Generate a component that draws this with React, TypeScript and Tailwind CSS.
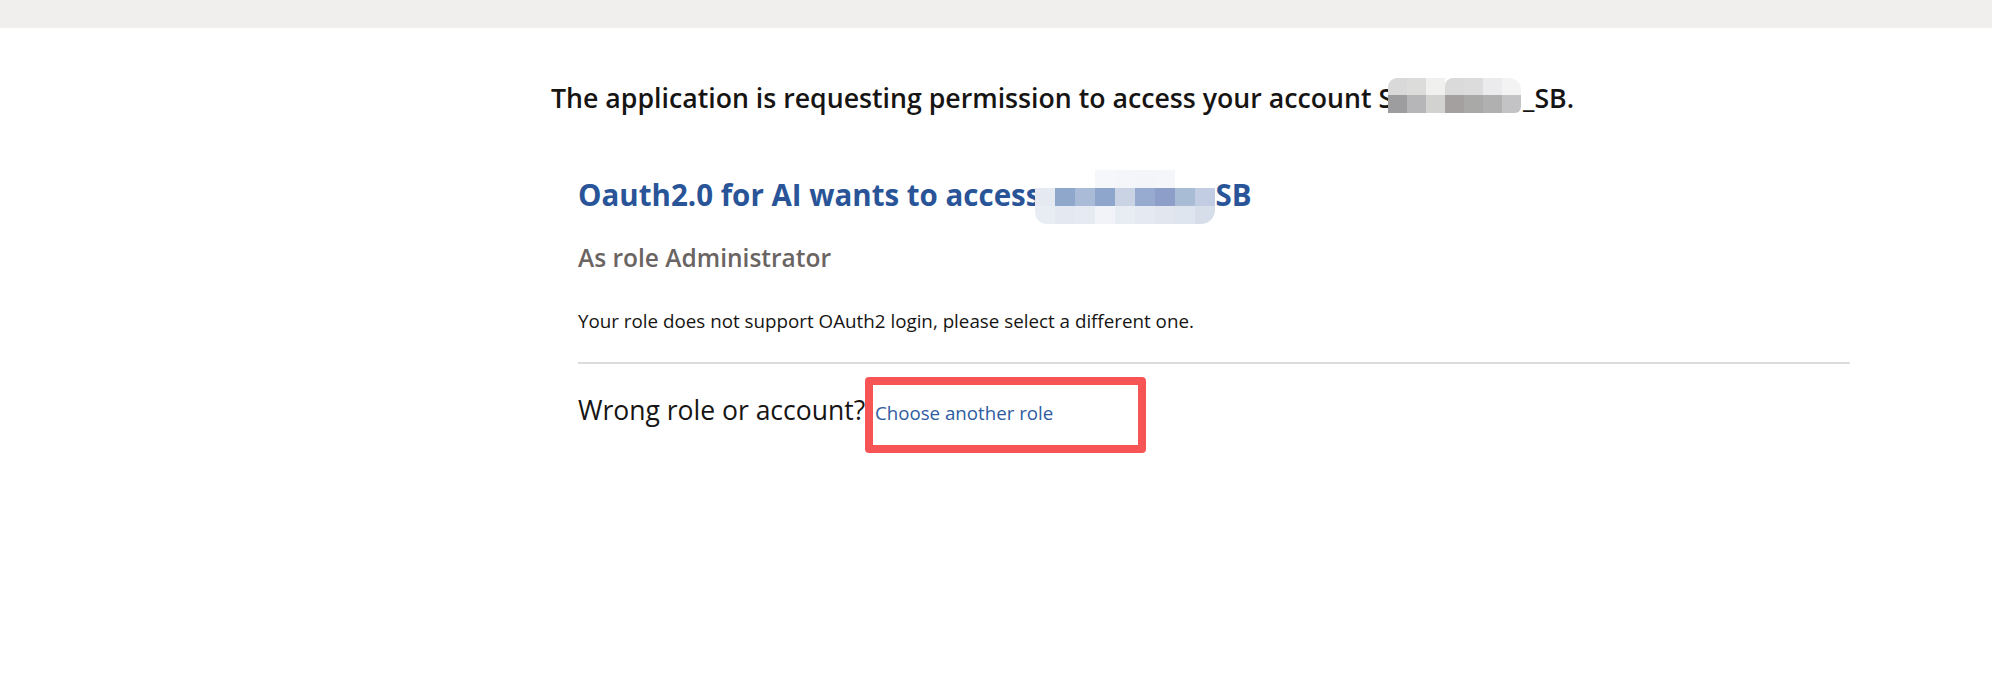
const accountCells = [
  { top: "bg-[#d9d9d9] rounded-tl-[9px]", bottom: "bg-[#9d9c9e]" },
  { top: "bg-[#dcdcdb]", bottom: "bg-[#b6b6b9]" },
  { top: "bg-[#f0f0ef] mt-[8px]", bottom: "bg-[#d2d3d0]" },
  { top: "bg-[#dadada] rounded-tl-[8px]", bottom: "bg-[#a4a09f]" },
  { top: "bg-[#dcdcdc]", bottom: "bg-[#a9a9a8]" },
  { top: "bg-[#ebebed]", bottom: "bg-[#b0b0b0]" },
  { top: "bg-[#f3f3f3] rounded-tr-[12px]", bottom: "bg-[#c3c3c6] rounded-br-[6px]" },
];

const clientCells = [
  { top: "bg-white", mid: "bg-[#e4e9f2]", bottom: "bg-[#e8ecf3] rounded-bl-[12px]" },
  { top: "bg-white", mid: "bg-[#8fa7cb]", bottom: "bg-[#e3e8f1]" },
  { top: "bg-white", mid: "bg-[#a9bbd6]", bottom: "bg-[#e6eaf2]" },
  { top: "bg-[#f6f7fb]", mid: "bg-[#8ea6cb]", bottom: "bg-[#f1f3f8]" },
  { top: "bg-[#f4f6fa]", mid: "bg-[#c9d3e4]", bottom: "bg-[#e8ecf3]" },
  { top: "bg-[#f3f5f9]", mid: "bg-[#97abd0]", bottom: "bg-[#e5e9f1]" },
  { top: "bg-[#f5f6fa]", mid: "bg-[#8d9fc9]", bottom: "bg-[#e1e6ef]" },
  { top: "bg-white", mid: "bg-[#a9bcd5]", bottom: "bg-[#dfe5ee]" },
  { top: "bg-white", mid: "bg-[#c2cde3]", bottom: "bg-[#d6deea] rounded-br-[14px]" },
];

// pixelated patch that hides the account name
function AccountMask() {
  return (
    <span className="relative inline-block w-[130px] h-0">
      <span className="absolute left-[-5px] bottom-[-5px] flex items-end">
        {accountCells.map((c, i) => (
          <span key={i} className="flex flex-col w-[19px]">
            <span className={`h-[17px] ${c.top}`} />
            <span className={`h-[18px] ${c.bottom}`} />
          </span>
        ))}
      </span>
    </span>
  );
}

function ClientMask() {
  return (
    <span className="relative inline-block w-[175px] h-0">
      <span className="absolute left-[-5px] bottom-[-18px] flex items-end">
        {clientCells.map((c, i) => (
          <span key={i} className="flex flex-col w-[20px]">
            <span className={`h-[18px] ${c.top}`} />
            <span className={`h-[18px] ${c.mid}`} />
            <span className={`h-[18px] ${c.bottom}`} />
          </span>
        ))}
      </span>
    </span>
  );
}

export default function App() {
  return (
    <div className="min-h-[682px] bg-white font-['Open_Sans',Arial,sans-serif] text-[#161513]">
      <div className="h-[28px] bg-[#f1efed]" />

      <main className="pl-[551px] pt-[52px]">
        <h1 className="text-[26.7px] leading-[36px] font-semibold">
          The application is requesting permission to access your account S<AccountMask />_SB.
        </h1>

        <section className="w-[1299px] pl-[27px] pt-[59px]">
          <h2 className="text-[29.5px] leading-[40px] font-bold text-[#295598]">
            Oauth2.0 for AI wants to access<ClientMask />SB
          </h2>

          <h3 className="mt-[27px] text-[24.5px] leading-[32px] font-semibold text-[#6a6462]">
            As role Administrator
          </h3>

          <p className="mt-[34px] text-[18.8px] leading-[26px]">
            Your role does not support OAuth2 login, please select a different one.
          </p>

          <div className="mt-[28px] h-[2px] bg-[#dcdcdc]" />

          <div className="relative mt-[28px] text-[26.5px] leading-[36px]">
            Wrong role or account?{" "}
            <a href="#" className="ml-[3px] text-[18.7px] leading-none text-[#2f5c9f]">
              Choose another role
            </a>
            {/* red highlight drawn over the link */}
            <span className="pointer-events-none absolute left-[287px] top-[-15px] h-[76px] w-[281px] rounded-[4px] border-[8px] border-[#f75555]" />
          </div>
        </section>
      </main>
    </div>
  );
}
